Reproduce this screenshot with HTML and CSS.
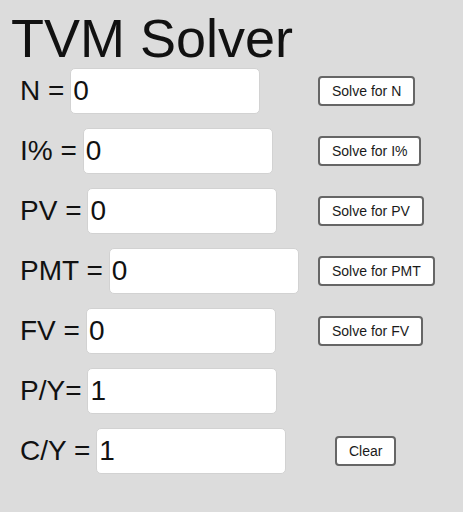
FILE: index.html
```html
<!DOCTYPE html>
<html lang="en">
<head>
    <meta charset="UTF-8">
    <meta name="viewport" content="width=device-width, initial-scale=1.0">
    <title>TVM Solver</title>
    <link rel="stylesheet" href="styles.css">
</head>
<body>
    <h1 class="title">TVM Solver</h1>
    <div class="solver">
        <div class="row">
            <div class="field"><label for="n">N =</label><input type="text" id="n" value="0"></div>
            <button class="solve-btn">Solve for N</button>
        </div>
        <div class="row">
            <div class="field"><label for="i">I% =</label><input type="text" id="i" value="0"></div>
            <button class="solve-btn">Solve for I%</button>
        </div>
        <div class="row">
            <div class="field"><label for="pv">PV =</label><input type="text" id="pv" value="0"></div>
            <button class="solve-btn">Solve for PV</button>
        </div>
        <div class="row">
            <div class="field"><label for="pmt">PMT =</label><input type="text" id="pmt" value="0"></div>
            <button class="solve-btn">Solve for PMT</button>
        </div>
        <div class="row">
            <div class="field"><label for="fv">FV =</label><input type="text" id="fv" value="0"></div>
            <button class="solve-btn">Solve for FV</button>
        </div>
        <div class="row">
            <div class="field"><label for="py">P/Y=</label><input type="text" id="py" value="1"></div>
        </div>
        <div class="row">
            <div class="field"><label for="cy">C/Y =</label><input type="text" id="cy" value="1"></div>
            <button class="solve-btn clear-btn">Clear</button>
        </div>
    </div>
</body>
</html>
```

FILE: styles.css
```css
body {
    font-family: 'Liberation Sans', Arial, sans-serif;
    background: #dcdcdc;
    margin: 0;
    padding: 0;
    color: #111;
}

.title {
    font-size: 54px;
    font-weight: normal;
    line-height: 56px;
    margin: 0;
    padding: 10px 0 0 11px;
}

.solver {
    display: flex;
    flex-direction: column;
    gap: 14px;
    padding: 2px 0 0 20px;
}

.row {
    display: grid;
    grid-template-columns: 298px auto;
    align-items: center;
    height: 46px;
}

.field {
    display: flex;
    align-items: center;
    gap: 6px;
}

.field label {
    font-size: 28px;
}

.field input {
    width: 190px;
    height: 46px;
    box-sizing: border-box;
    padding: 0 2px;
    border: 1px solid #d2d2d2;
    border-radius: 5px;
    background: #fff;
    font-family: inherit;
    font-size: 28px;
    color: #111;
    outline: none;
}

.solve-btn {
    justify-self: start;
    height: 30px;
    padding: 0 12px;
    border: 2px solid #666;
    border-radius: 4px;
    background: #fff;
    font-family: inherit;
    font-size: 14px;
    color: #1a1a1a;
    cursor: pointer;
}

.clear-btn {
    margin-left: 17px;
}
```
